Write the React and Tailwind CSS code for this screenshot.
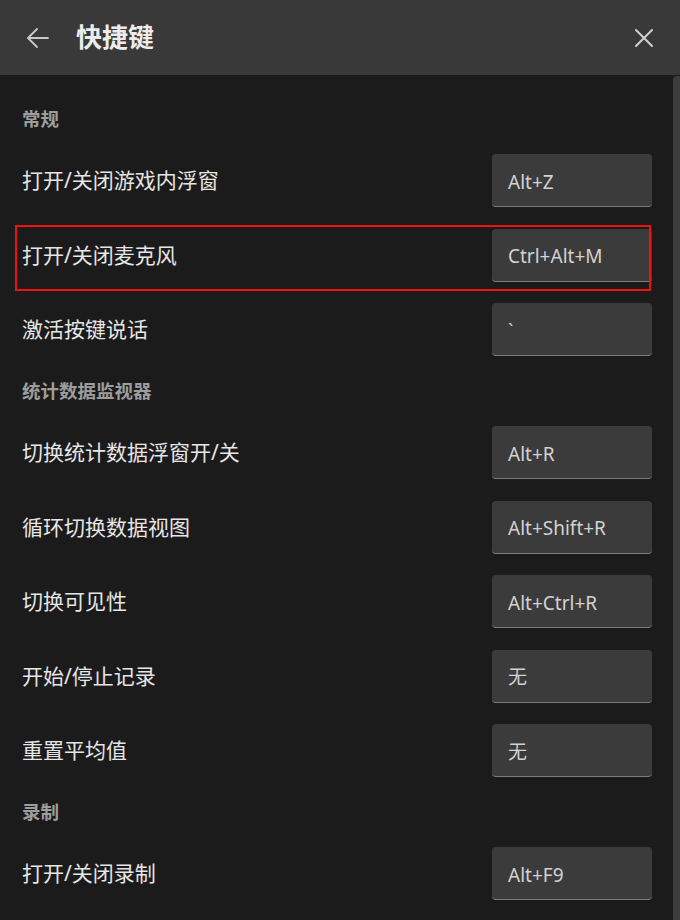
const sections = [
  {
    title: '常规',
    rows: [
      { label: '打开/关闭游戏内浮窗', keys: 'Alt+Z' },
      { label: '打开/关闭麦克风', keys: 'Ctrl+Alt+M', marked: true },
      { label: '激活按键说话', keys: '`' },
    ],
  },
  {
    title: '统计数据监视器',
    rows: [
      { label: '切换统计数据浮窗开/关', keys: 'Alt+R' },
      { label: '循环切换数据视图', keys: 'Alt+Shift+R' },
      { label: '切换可见性', keys: 'Alt+Ctrl+R' },
      { label: '开始/停止记录', keys: '无' },
      { label: '重置平均值', keys: '无' },
    ],
  },
  {
    title: '录制',
    rows: [{ label: '打开/关闭录制', keys: 'Alt+F9' }],
  },
];

function ShortcutRow({ label, keys, marked }) {
  return (
    <div className="relative flex h-[74.5px] items-center justify-between pl-[22px] pr-[21px]">
      <span className="text-[21px] text-[#e6e6e6]">{label}</span>
      <div className="flex h-[53px] w-[160px] items-center rounded-[4px] border-b border-[#7c7c7c] bg-[#3b3b3b] pl-4 pt-[3px] text-[19px] text-[#d2d2d2]">
        {keys}
      </div>
      {marked && (
        <div className="pointer-events-none absolute left-[15px] top-[7px] h-[66px] w-[636px] border-2 border-[#f01010]" />
      )}
    </div>
  );
}

export default function App() {
  return (
    <div
      className="flex h-[920px] w-[680px] flex-col overflow-hidden bg-[#1b1b1b]"
      style={{ fontFamily: '"Noto Sans", "Noto Sans CJK SC", sans-serif' }}
    >
      {/* header */}
      <header className="flex h-[75px] shrink-0 items-center bg-[#393939] pl-[26px] pr-[25px]">
        <svg width="24" height="24" viewBox="0 0 24 24" fill="none" stroke="#c9c9c9" strokeWidth="1.8" strokeLinecap="round" strokeLinejoin="round">
          <path d="M22 12H2M11 3l-9 9 9 9" />
        </svg>
        <h1 className="ml-[26px] text-[26px] font-bold text-[#ececec]">快捷键</h1>
        <svg className="ml-auto" width="22" height="22" viewBox="0 0 22 22" fill="none" stroke="#d0d0d0" strokeWidth="2" strokeLinecap="round">
          <path d="M3 3l16 16M19 3L3 19" />
        </svg>
      </header>

      <div className="flex min-h-0 flex-1">
        <div className="flex-1 pt-5">
          {sections.map((s) => (
            <section key={s.title}>
              <div className="flex h-[48.5px] items-center pl-[22px] text-[18.5px] font-bold text-[#9d9d9d]">
                {s.title}
              </div>
              {s.rows.map((r) => (
                <ShortcutRow key={r.label} {...r} />
              ))}
            </section>
          ))}
        </div>
        {/* scrollbar */}
        <div className="mt-px w-[7px] shrink-0 rounded-tl-[4px] bg-[#3c3c3c]" />
      </div>
    </div>
  );
}
